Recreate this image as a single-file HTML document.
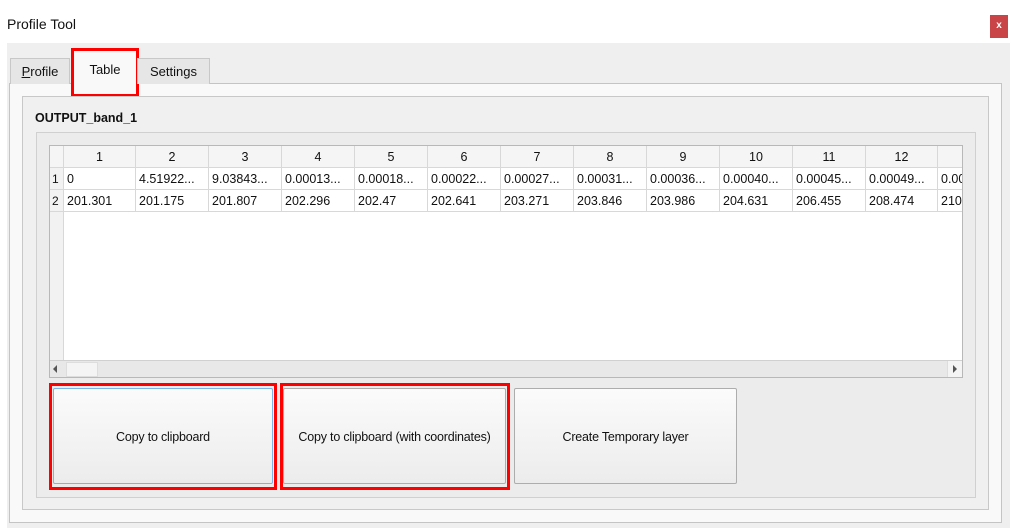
<!DOCTYPE html>
<html><head><meta charset="utf-8"><style>
*{margin:0;padding:0;box-sizing:border-box}
body{width:1024px;height:528px;background:#fff;position:relative;overflow:hidden;font-family:"Liberation Sans",sans-serif;font-size:12px;color:#111}
.a{position:absolute}
.title{left:7px;top:16px;font-size:14px}
.close{left:990px;top:15px;width:18px;height:23px;background:#c94446;color:#fff;font-size:10px;text-align:center;line-height:22px;font-weight:bold}
.bg{left:7px;top:43px;width:1003px;height:485px;background:#efefef}
.tab{top:58px;height:26px;border:1px solid #c8c8c8;border-bottom:none;background:#e6e6e6;text-align:center;line-height:26px;font-size:13px}
.panel{left:9px;top:83px;width:993px;height:440px;border:1px solid #c4c4c4;background:#f9f9f9}
.grp{left:22px;top:96px;width:967px;height:414px;border:1px solid #c8c8c8;background:#f0f0f0}
.frame{left:36px;top:132px;width:940px;height:366px;border:1px solid #d0d0d0;background:#ececec}
.tbl{left:49px;top:145px;width:914px;height:233px;border:1px solid #b8b8b8;background:#fff;overflow:hidden}
.hdr{position:absolute;top:0;height:22px;border-right:1px solid #d8d8d8;border-bottom:1px solid #d8d8d8;background:#f5f5f5;text-align:center;line-height:22px;font-size:12.5px}
.c{position:absolute;height:22px;border-right:1px solid #d8d8d8;border-bottom:1px solid #d8d8d8;line-height:22px;padding-left:3px;font-size:12.5px;white-space:nowrap;overflow:hidden}
.rh{position:absolute;left:0;width:14px;height:22px;background:#f2f2f2;border-right:1px solid #d8d8d8;border-bottom:1px solid #d8d8d8;line-height:22px;padding-left:2px;font-size:12px}
.sb{position:absolute;left:0;top:214px;width:912px;height:18px;background:#e8e8e8;border-top:1px solid #d0d0d0}
.btn{top:388px;height:96px;background:linear-gradient(#fbfbfb,#ececec);border:1px solid #adadad;border-radius:2px;text-align:center;line-height:96px;font-size:12.5px;letter-spacing:-0.2px}
.red{border:3px solid #f00}
</style></head><body>
<div class="a title">Profile Tool</div>
<div class="a close">x</div>
<div class="a bg"></div>
<div class="a panel"></div>
<div class="a tab" style="left:10px;width:60px"><u>P</u>rofile</div>
<div class="a tab" style="left:72px;width:66px;top:51px;height:33px;background:#f9f9f9;line-height:38px;border:none">Table</div>
<div class="a red" style="left:71px;top:48px;width:68px;height:49px"></div>
<div class="a tab" style="left:137px;width:73px">Settings</div>
<div class="a grp"></div>
<div class="a" style="left:35px;top:111px;font-weight:bold;font-size:12.5px">OUTPUT_band_1</div>
<div class="a frame"></div>
<div class="a tbl">
<div class="hdr" style="left:0;width:14px"></div>
<div class="hdr" style="left:14px;width:72px">1</div>
<div class="hdr" style="left:86px;width:73px">2</div>
<div class="hdr" style="left:159px;width:73px">3</div>
<div class="hdr" style="left:232px;width:73px">4</div>
<div class="hdr" style="left:305px;width:73px">5</div>
<div class="hdr" style="left:378px;width:73px">6</div>
<div class="hdr" style="left:451px;width:73px">7</div>
<div class="hdr" style="left:524px;width:73px">8</div>
<div class="hdr" style="left:597px;width:73px">9</div>
<div class="hdr" style="left:670px;width:73px">10</div>
<div class="hdr" style="left:743px;width:73px">11</div>
<div class="hdr" style="left:816px;width:72px">12</div>
<div class="hdr" style="left:888px;width:40px"></div>
<div class="rh" style="top:22px">1</div>
<div class="rh" style="top:44px">2</div>
<div class="rh" style="top:66px;height:148px;border-bottom:none"></div>
<div class="c" style="top:22px;left:14px;width:72px">0</div>
<div class="c" style="top:22px;left:86px;width:73px">4.51922...</div>
<div class="c" style="top:22px;left:159px;width:73px">9.03843...</div>
<div class="c" style="top:22px;left:232px;width:73px">0.00013...</div>
<div class="c" style="top:22px;left:305px;width:73px">0.00018...</div>
<div class="c" style="top:22px;left:378px;width:73px">0.00022...</div>
<div class="c" style="top:22px;left:451px;width:73px">0.00027...</div>
<div class="c" style="top:22px;left:524px;width:73px">0.00031...</div>
<div class="c" style="top:22px;left:597px;width:73px">0.00036...</div>
<div class="c" style="top:22px;left:670px;width:73px">0.00040...</div>
<div class="c" style="top:22px;left:743px;width:73px">0.00045...</div>
<div class="c" style="top:22px;left:816px;width:72px">0.00049...</div>
<div class="c" style="top:22px;left:888px;width:30px;border-right:none">0.0004</div>
<div class="c" style="top:44px;left:14px;width:72px">201.301</div>
<div class="c" style="top:44px;left:86px;width:73px">201.175</div>
<div class="c" style="top:44px;left:159px;width:73px">201.807</div>
<div class="c" style="top:44px;left:232px;width:73px">202.296</div>
<div class="c" style="top:44px;left:305px;width:73px">202.47</div>
<div class="c" style="top:44px;left:378px;width:73px">202.641</div>
<div class="c" style="top:44px;left:451px;width:73px">203.271</div>
<div class="c" style="top:44px;left:524px;width:73px">203.846</div>
<div class="c" style="top:44px;left:597px;width:73px">203.986</div>
<div class="c" style="top:44px;left:670px;width:73px">204.631</div>
<div class="c" style="top:44px;left:743px;width:73px">206.455</div>
<div class="c" style="top:44px;left:816px;width:72px">208.474</div>
<div class="c" style="top:44px;left:888px;width:30px;border-right:none">210.5</div>
<div class="sb">
<div class="a" style="left:3px;top:4px;width:0;height:0;border-top:4px solid transparent;border-bottom:4px solid transparent;border-right:4px solid #555"></div>
<div class="a" style="left:16px;top:1px;width:32px;height:15px;background:#f4f4f4;border:1px solid #ddd"></div>
<div class="a" style="left:897px;top:0;width:15px;height:17px;background:#f4f4f4;border-left:1px solid #ddd"></div>
<div class="a" style="left:903px;top:4px;width:0;height:0;border-top:4px solid transparent;border-bottom:4px solid transparent;border-left:4px solid #555"></div>
</div>
</div>
<div class="a btn" style="left:53px;width:220px;border-color:#7ab4e8">Copy to clipboard</div>
<div class="a red" style="left:49px;top:383px;width:228px;height:107px"></div>
<div class="a btn" style="left:283px;width:223px">Copy to clipboard (with coordinates)</div>
<div class="a red" style="left:280px;top:383px;width:230px;height:107px"></div>
<div class="a btn" style="left:514px;width:223px">Create Temporary layer</div>
</body></html>
